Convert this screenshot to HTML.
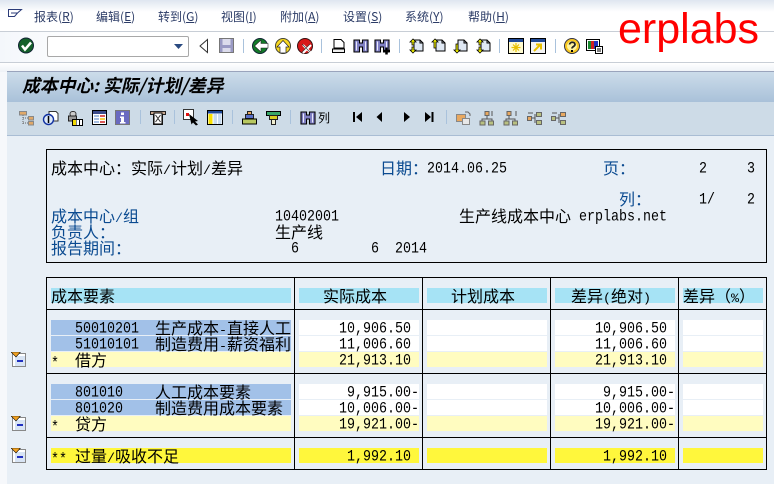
<!DOCTYPE html>
<html><head><meta charset="utf-8"><style>
html,body{margin:0;padding:0}
body{width:774px;height:484px;overflow:hidden;position:relative;background:#f6f8fb;font-family:"Liberation Mono","WenQuanYi Zen Hei","Noto Sans CJK SC",monospace;color:#000}
div,span.a,svg.i{position:absolute}
.b{background:#000}
.c,.n,.k{white-space:pre;height:16px;line-height:16px}
.c{font-size:16px;margin-top:-1px;font-family:"WenQuanYi Zen Hei","Noto Sans CJK SC",sans-serif}
.k{font-size:16px;margin-top:-1px;font-family:"WenQuanYi Zen Hei","Noto Sans CJK SC",sans-serif;color:#0a4a90}
.n{font-size:13.33px;margin-top:2px;font-family:"Liberation Mono",monospace;transform:scaleY(1.2);transform-origin:50% 50%}
.c i,.k i{font-style:normal;display:inline-block;width:8px;text-align:center;font-family:"Liberation Mono",monospace;font-size:13.33px}
.m{font-size:12px;line-height:14px;top:10px;color:#2b3b66;white-space:pre;font-family:"WenQuanYi Zen Hei","Noto Sans CJK SC",sans-serif}
.s{width:1px;background:#a9c2dc;height:14px}
.h{background:#a6e3f5;height:15px}
.w{background:#fff;height:15px}
.y{background:#fffcc0;height:15px}
.z{background:#fff73c;height:15px}
.q{background:#a2c1e8;height:15px}
svg.i{width:16px;height:16px;overflow:visible}
</style></head><body>
<svg width="0" height="0" style="position:absolute"><defs>
<symbol id="bino" viewBox="0 0 16 16"><path d="M1 2h5.500v3h3V2H15v12H9.500V9h-3v5H1z" fill="#8080c4" stroke="#000" stroke-width="1.100"/><path d="M3.500 3.500v9M12.500 3.500v9" stroke="#e8e8f8" stroke-width="1"/></symbol>
<symbol id="page" viewBox="0 0 16 16"><path d="M5 2h6l3 3v8H5z" fill="#dfe8f4" stroke="#000"/><path d="M11 2v3h3" fill="none" stroke="#000"/></symbol>
<symbol id="win" viewBox="0 0 16 16"><rect x=".5" y=".5" width="15" height="15" fill="#fffbd0" stroke="#000"/><rect x="1" y="1" width="14" height="3" fill="#204a98"/></symbol>
<symbol id="note" viewBox="0 0 16 16"><rect x="1.500" y="1.500" width="13" height="13" fill="#fff" stroke="#888"/><rect x="4" y="4" width="10" height="10" fill="#d8e4f4"/><path d="M6 9h6" stroke="#2030c0" stroke-width="2"/><path d="M0 0h9.500L5 5z" fill="#f0a020" stroke="#000" stroke-width=".6"/></symbol>
</defs></svg>

<!-- top bands -->
<div style="left:0;top:0;width:774px;height:31px;background:linear-gradient(#dfe6f0,#fff 38%)"></div>
<div style="left:0;top:31px;width:774px;height:1px;background:#c8ced6"></div>
<div style="left:0;top:32px;width:774px;height:30px;background:linear-gradient(90deg,#f4f7fb,#fff 12%)"></div>
<div style="left:0;top:62px;width:774px;height:1px;background:#c8ced6"></div>
<div style="left:0;top:63px;width:774px;height:9px;background:linear-gradient(#fff,#eef2f7)"></div>

<!-- menu -->
<svg class="i" style="left:7px;top:8px"><path d="M1.500 1.500h13l-4 3.500-3 3.500h-6z" fill="none" stroke="#2b3b78" stroke-width="1"/><path d="M4 5h6" stroke="#2b3b78"/></svg>
<div class="m" style="left:34px">报表(<u>R</u>)</div>
<div class="m" style="left:96px">编辑(<u>E</u>)</div>
<div class="m" style="left:158px">转到(<u>G</u>)</div>
<div class="m" style="left:221px">视图(<u>I</u>)</div>
<div class="m" style="left:280px">附加(<u>A</u>)</div>
<div class="m" style="left:343px">设置(<u>S</u>)</div>
<div class="m" style="left:405px">系统(<u>Y</u>)</div>
<div class="m" style="left:468px">帮助(<u>H</u>)</div>
<div style="left:618px;top:5px;font:43px/48px 'Liberation Sans',sans-serif;color:#f00;white-space:pre">erplabs</div>

<!-- toolbar 1 -->
<svg class="i" style="left:18px;top:38px"><circle cx="8" cy="7.500" r="7.500" fill="#14602a" stroke="#123"/><path d="M4 7.500l3 4 6-7" fill="none" stroke="#fff" stroke-width="2.500"/></svg>
<div style="left:47px;top:36px;width:140px;height:19px;background:#fff;border:1px solid #a8a8a8;border-radius:2px"></div>
<svg class="i" style="left:172px;top:42px"><path d="M2 2h9L6.500 7z" fill="#2a4a80"/></svg>
<svg class="i" style="left:198px;top:38px"><path d="M9.500 1.500v13L2 8z" fill="#fff" stroke="#333"/></svg>
<svg class="i" style="left:219px;top:38px"><rect x=".5" y=".5" width="14" height="14" fill="#9a9ac4" stroke="#777"/><rect x="3.500" y="1" width="8" height="6" fill="#dcdcec"/><rect x="3.500" y="10" width="8" height="4" fill="#dcdcec"/></svg>
<div class="s" style="left:243px;top:39px"></div>
<svg class="i" style="left:252px;top:38px"><circle cx="8" cy="8" r="7.500" fill="#127a28" stroke="#123"/><path d="M16 5.500h-7V2L2.500 8 9 14v-4h7z" fill="#fff" stroke="#222" stroke-width=".6"/></svg>
<svg class="i" style="left:275px;top:38px"><circle cx="8" cy="8" r="7.500" fill="#f8d820" stroke="#443"/><path d="M8 2.500L14 9h-3v6H5V9H2z" fill="#fff" stroke="#222" stroke-width=".7"/></svg>
<svg class="i" style="left:297px;top:38px"><circle cx="8" cy="8" r="7.500" fill="#d81818" stroke="#311"/><path d="M6 7l8 8M14 7l-8 8" stroke="#fff" stroke-width="2.200"/><path d="M5 6l8 8M13 6l-8 8" stroke="#333" stroke-width=".6"/></svg>
<div class="s" style="left:321px;top:39px"></div>
<svg class="i" style="left:331px;top:38px"><path d="M3 1.500h7l3 3V10H3z" fill="#fff" stroke="#000"/><path d="M1.500 11h12v3.500h-12z" fill="#eee" stroke="#000"/></svg>
<svg class="i" style="left:353px;top:38px"><use href="#bino"/></svg>
<svg class="i" style="left:374px;top:38px"><use href="#bino"/><path d="M9 13h7M12.500 9.500v7" stroke="#000" stroke-width="2.500"/></svg>
<div class="s" style="left:399px;top:39px"></div>
<svg class="i" style="left:409px;top:38px"><use href="#page"/><path d="M4 1L1 4h2v3h2V4h2zM4 15l3-3H5V9H3v3H1z" fill="#ff0" stroke="#000" stroke-width=".8"/></svg>
<svg class="i" style="left:431px;top:38px"><use href="#page"/><path d="M4 1L1 4h2v6h2V4h2z" fill="#ff0" stroke="#000" stroke-width=".8"/></svg>
<svg class="i" style="left:453px;top:38px"><use href="#page"/><path d="M4 15l3-3H5V6H3v6H1z" fill="#ff0" stroke="#000" stroke-width=".8"/></svg>
<svg class="i" style="left:476px;top:38px"><use href="#page"/><path d="M4 1L1 4h2v3h2V4h2zM4 15l3-3H5V9H3v3H1z" fill="#ff0" stroke="#000" stroke-width=".8"/></svg>
<div class="s" style="left:499px;top:39px"></div>
<svg class="i" style="left:508px;top:38px"><use href="#win"/><path d="M8 5v9M3.500 9.500h9M5 6.500l6 6M11 6.500l-6 6" stroke="#e8c000" stroke-width="1.200"/></svg>
<svg class="i" style="left:530px;top:38px"><use href="#win"/><rect x="1" y="4" width="14" height="11" fill="#f4f4f4"/><path d="M4 13l6-6M6 6.500h5v5" fill="none" stroke="#e8c000" stroke-width="2"/></svg>
<div class="s" style="left:555px;top:39px"></div>
<svg class="i" style="left:564px;top:38px"><circle cx="8" cy="8" r="7.500" fill="#f8c820" stroke="#334"/><circle cx="8" cy="8" r="5" fill="#fff4a0"/><path d="M5.500 6.500C6 3.500 11 3.500 11 6.500 11 8.500 8 8.500 8 10.500" fill="none" stroke="#222" stroke-width="1.800"/><rect x="7" y="12" width="2" height="2"/></svg>
<svg class="i" style="left:586px;top:38px"><rect x=".5" y="1.500" width="13" height="11" fill="#fff" stroke="#000"/><rect x="2" y="3" width="3" height="8" fill="#1a8a30"/><rect x="5" y="3" width="3" height="8" fill="#d02020"/><rect x="8" y="3" width="4" height="8" fill="#2030c0"/><rect x="9.500" y="8.500" width="7" height="7" fill="#fff" stroke="#000"/><path d="M11 11h4M11 13h4" stroke="#000"/></svg>

<!-- title bar -->
<div style="left:7px;top:71px;width:767px;height:1px;background:#9aa4bc"></div>
<div style="left:7px;top:72px;width:767px;height:30px;background:linear-gradient(#ccdcea,#a9c1d9)"></div>
<div style="left:22px;top:75px;height:20px;line-height:20px;font-size:17.800px;font-weight:bold;font-style:italic;white-space:pre;font-family:'WenQuanYi Zen Hei','Noto Sans CJK SC',sans-serif">成本中心: 实际/计划/差异</div>
<div style="left:7px;top:102px;width:767px;height:33px;background:#cddbe7"></div>
<div style="left:7px;top:135px;width:767px;height:1px;background:#a9bdd4"></div>
<div style="left:7px;top:136px;width:767px;height:348px;background:#e8eff6"></div>

<!-- toolbar 2 -->
<svg class="i" style="left:19px;top:110px"><path d="M4 5v9M4 8h6M4 13h6" stroke="#666" stroke-dasharray="1 1"/><rect x=".5" y="1.500" width="7" height="3.500" fill="#e0a868" stroke="#888"/><rect x="9.500" y="6.500" width="5" height="3.500" fill="#e0a868" stroke="#888"/><rect x="9.500" y="11.500" width="5" height="3.500" fill="#e0a868" stroke="#888"/></svg>
<svg class="i" style="left:43px;top:110px"><path d="M6 1.500h7l2 2V11H6z" fill="#fff" stroke="#333"/><circle cx="5.500" cy="9.500" r="5" fill="#dce8f8" stroke="#1030a0" stroke-width="1.400"/><path d="M5.500 6v7" stroke="#000" stroke-width="1.500"/></svg>
<svg class="i" style="left:67px;top:110px"><rect x="3" y="1.500" width="6" height="5" rx="2.500" fill="#ccc" stroke="#333"/><rect x="1.500" y="6" width="8" height="5" fill="#999" stroke="#222"/><rect x="5.500" y="9.500" width="10" height="6" fill="#fff" stroke="#000"/><path d="M9 10v5M12.500 10v5" stroke="#000"/><rect x="6" y="10" width="3" height="5" fill="#f0d800"/></svg>
<svg class="i" style="left:92px;top:110px"><rect x=".5" y=".5" width="14" height="14" fill="#fff" stroke="#000"/><rect x="1" y="1" width="13" height="3" fill="#3a4a8a"/><path d="M2 6h5M2 9h5M2 12h5" stroke="#88a8d8" stroke-width="1.500"/><path d="M8 6h5" stroke="#d02020" stroke-width="1.500"/><path d="M8 9h5" stroke="#f0c000" stroke-width="1.500"/><path d="M8 12h5" stroke="#d02020" stroke-width="1.500"/></svg>
<svg class="i" style="left:115px;top:110px"><rect x=".5" y=".5" width="14" height="14" fill="#6a6ac0" stroke="#777"/><rect x="6" y="2.500" width="3" height="2.500" fill="#fff"/><path d="M5 6.500h4v5.500h1.500v1.500h-5.500V12H6V8H5z" fill="#fff"/></svg>
<div class="s" style="left:140px;top:110px"></div>
<svg class="i" style="left:150px;top:110px"><path d="M.5 1.500h15v3h-2l-1 0v10h-9V4.500h-3z" fill="#c8a890" stroke="#222"/><rect x="4" y="3" width="8" height="11" fill="#fff" stroke="#000"/><path d="M5.500 5l5 7M10.500 5l-5 7" stroke="#333"/></svg>
<div class="s" style="left:174px;top:110px"></div>
<svg class="i" style="left:183px;top:109px"><rect x=".5" y=".5" width="10" height="10" fill="#fff" stroke="#333"/><rect x="3" y="4" width="3" height="3" fill="#e01010"/><path d="M6 5l9 7-3 .5 3 3-2 1-3-3-1.500 2z" fill="#000"/></svg>
<svg class="i" style="left:207px;top:110px"><rect x=".5" y=".5" width="15" height="14" fill="#fff" stroke="#000"/><rect x="1" y="1" width="14" height="2.500" fill="#204a98"/><rect x="1.500" y="4" width="4" height="10" fill="#f8e000"/><rect x="6.500" y="4" width="3.500" height="10" fill="#c8dcf0"/><rect x="11" y="4" width="3.500" height="10" fill="#c8dcf0"/></svg>
<div class="s" style="left:232px;top:110px"></div>
<svg class="i" style="left:242px;top:110px"><rect x="5.500" y="1.500" width="4" height="3" fill="#e8a860" stroke="#222"/><rect x="3.500" y="4.500" width="8" height="4" fill="#5a70c8" stroke="#222"/><rect x=".5" y="9" width="14" height="5" fill="#b8c860" stroke="#000"/></svg>
<svg class="i" style="left:266px;top:110px"><rect x=".5" y="1.500" width="14" height="4" fill="#38a868" stroke="#000"/><rect x="3.500" y="5.500" width="8" height="4" fill="#d8d020" stroke="#222"/><rect x="5.500" y="9.500" width="4" height="5" fill="#f0eed0" stroke="#222"/></svg>
<div class="s" style="left:290px;top:110px"></div>
<svg class="i" style="left:300px;top:110px"><use href="#bino"/></svg>
<div style="left:318px;top:111px;font-size:12px;line-height:14px;font-family:'WenQuanYi Zen Hei','Noto Sans CJK SC',sans-serif">列</div>
<svg class="i" style="left:352px;top:110px"><path d="M1 2h2v10H1zM10 2v10L4 7z"/></svg>
<svg class="i" style="left:375px;top:110px"><path d="M7 2v10L1.500 7z"/></svg>
<svg class="i" style="left:403px;top:110px"><path d="M1 2v10l6-5z"/></svg>
<svg class="i" style="left:424px;top:110px"><path d="M1 2v10l6-5zM7.500 2h2v10h-2z"/></svg>
<div class="s" style="left:446px;top:110px"></div>
<svg class="i" style="left:456px;top:110px"><rect x=".5" y="4.500" width="9" height="7" fill="#e8a860" stroke="#888"/><rect x="6.500" y="8.500" width="7" height="6" fill="#e8e8e8" stroke="#888"/><path d="M9 2h3l2 2v2" fill="none" stroke="#666"/></svg>
<svg class="i" style="left:479px;top:110px"><rect x="6" y="1.500" width="4" height="4" fill="#e8a860" stroke="#666"/><path d="M8 6v3M3 11V9h10v2M13 6V1" fill="none" stroke="#555"/><rect x="1" y="11" width="5" height="4" fill="#b8c080" stroke="#666"/><rect x="9.500" y="11" width="5" height="4" fill="#b8c080" stroke="#666"/></svg>
<svg class="i" style="left:503px;top:110px"><rect x="4" y="1.500" width="4" height="4" fill="#e8a860" stroke="#666"/><path d="M6 6v3M3 11V9h9v2M13 1v5" fill="none" stroke="#555"/><rect x="1" y="11" width="5" height="4" fill="#b8c080" stroke="#666"/><rect x="9.500" y="11" width="5" height="4" fill="#b8c080" stroke="#666"/></svg>
<svg class="i" style="left:527px;top:110px"><rect x=".5" y="6.500" width="4" height="4" fill="#e8a860" stroke="#666"/><path d="M1 3h5M5 8h3M8 4v9" fill="none" stroke="#555"/><rect x="9.500" y="2.500" width="5" height="4" fill="#b8c080" stroke="#666"/><rect x="9.500" y="10.500" width="5" height="4" fill="#b8c080" stroke="#666"/></svg>
<svg class="i" style="left:551px;top:110px"><rect x=".5" y="6.500" width="4" height="4" fill="#b8c080" stroke="#666"/><path d="M1 3h5M5 8h3M8 4v9" fill="none" stroke="#555"/><rect x="9.500" y="2.500" width="5" height="4" fill="#e8a860" stroke="#666"/><rect x="9.500" y="10.500" width="5" height="4" fill="#b8c080" stroke="#666"/></svg>

<!-- header box -->
<div style="left:46px;top:149px;width:719px;height:112px;border:1px solid #000"></div>
<div class="c" style="left:51px;top:160px">成本中心：实际<i>/</i>计划<i>/</i>差异</div>
<div class="k" style="left:380px;top:160px">日期：</div>
<div class="n" style="left:427px;top:160px">2014.06.25</div>
<div class="k" style="left:603px;top:160px">页：</div>
<div class="n" style="left:699px;top:160px">2</div>
<div class="n" style="left:747px;top:160px">3</div>
<div class="k" style="left:619px;top:191px">列：</div>
<div class="n" style="left:699px;top:191px">1/</div>
<div class="n" style="left:747px;top:191px">2</div>
<div class="k" style="left:51px;top:208px">成本中心<i>/</i>组</div>
<div class="n" style="left:275px;top:208px">10402001</div>
<div class="c" style="left:459px;top:208px">生产线成本中心</div>
<div class="n" style="left:579px;top:208px">erplabs.net</div>
<div class="k" style="left:51px;top:224px">负责人：</div>
<div class="c" style="left:275px;top:224px">生产线</div>
<div class="k" style="left:51px;top:240px">报告期间：</div>
<div class="n" style="left:291px;top:240px">6</div>
<div class="n" style="left:371px;top:240px">6</div>
<div class="n" style="left:395px;top:240px">2014</div>

<!-- table grid -->
<div class="b" style="left:46px;top:277px;width:721px;height:1px"></div>
<div class="b" style="left:46px;top:309px;width:721px;height:1px"></div>
<div class="b" style="left:46px;top:373px;width:721px;height:1px"></div>
<div class="b" style="left:46px;top:437px;width:721px;height:1px"></div>
<div class="b" style="left:46px;top:469px;width:721px;height:1px"></div>
<div class="b" style="left:46px;top:277px;width:1px;height:193px"></div>
<div class="b" style="left:294px;top:277px;width:1px;height:193px"></div>
<div class="b" style="left:422px;top:277px;width:1px;height:193px"></div>
<div class="b" style="left:550px;top:277px;width:1px;height:193px"></div>
<div class="b" style="left:678px;top:277px;width:1px;height:193px"></div>
<div class="b" style="left:766px;top:277px;width:1px;height:193px"></div>

<!-- header cells -->
<div class="h" style="left:51px;top:288px;width:240px"></div>
<div class="h" style="left:299px;top:288px;width:120px"></div>
<div class="h" style="left:427px;top:288px;width:120px"></div>
<div class="h" style="left:555px;top:288px;width:120px"></div>
<div class="h" style="left:683px;top:288px;width:80px"></div>
<div class="c" style="left:51px;top:288px">成本要素</div>
<div class="c" style="left:323px;top:288px">实际成本</div>
<div class="c" style="left:451px;top:288px">计划成本</div>
<div class="c" style="left:571px;top:288px">差异<i>(</i>绝对<i>)</i></div>
<div class="c" style="left:683px;top:288px">差异（<i>%</i>）</div>

<!-- group 1 -->
<div class="q" style="left:51px;top:320px;width:240px"></div>
<div class="w" style="left:299px;top:320px;width:120px"></div>
<div class="w" style="left:427px;top:320px;width:120px"></div>
<div class="w" style="left:555px;top:320px;width:120px"></div>
<div class="w" style="left:683px;top:320px;width:80px"></div>
<div class="q" style="left:51px;top:336px;width:240px"></div>
<div class="w" style="left:299px;top:336px;width:120px"></div>
<div class="w" style="left:427px;top:336px;width:120px"></div>
<div class="w" style="left:555px;top:336px;width:120px"></div>
<div class="w" style="left:683px;top:336px;width:80px"></div>
<div class="y" style="left:51px;top:352px;width:240px"></div>
<div class="y" style="left:299px;top:352px;width:120px"></div>
<div class="y" style="left:427px;top:352px;width:120px"></div>
<div class="y" style="left:555px;top:352px;width:120px"></div>
<div class="y" style="left:683px;top:352px;width:80px"></div>
<div class="n" style="left:75px;top:320px">50010201</div>
<div class="c" style="left:155px;top:320px">生产成本<i>-</i>直接人工</div>
<div class="n" style="left:75px;top:336px">51010101</div>
<div class="c" style="left:155px;top:336px">制造费用<i>-</i>薪资福利</div>
<div class="n" style="left:51px;top:355px">*</div>
<div class="c" style="left:75px;top:352px">借方</div>
<div class="n" style="left:339px;top:320px">10,906.50</div>
<div class="n" style="left:339px;top:336px">11,006.60</div>
<div class="n" style="left:339px;top:352px">21,913.10</div>
<div class="n" style="left:595px;top:320px">10,906.50</div>
<div class="n" style="left:595px;top:336px">11,006.60</div>
<div class="n" style="left:595px;top:352px">21,913.10</div>

<!-- group 2 -->
<div class="q" style="left:51px;top:384px;width:240px"></div>
<div class="w" style="left:299px;top:384px;width:120px"></div>
<div class="w" style="left:427px;top:384px;width:120px"></div>
<div class="w" style="left:555px;top:384px;width:120px"></div>
<div class="w" style="left:683px;top:384px;width:80px"></div>
<div class="q" style="left:51px;top:400px;width:240px"></div>
<div class="w" style="left:299px;top:400px;width:120px"></div>
<div class="w" style="left:427px;top:400px;width:120px"></div>
<div class="w" style="left:555px;top:400px;width:120px"></div>
<div class="w" style="left:683px;top:400px;width:80px"></div>
<div class="y" style="left:51px;top:416px;width:240px"></div>
<div class="y" style="left:299px;top:416px;width:120px"></div>
<div class="y" style="left:427px;top:416px;width:120px"></div>
<div class="y" style="left:555px;top:416px;width:120px"></div>
<div class="y" style="left:683px;top:416px;width:80px"></div>
<div class="n" style="left:75px;top:384px">801010</div>
<div class="c" style="left:155px;top:384px">人工成本要素</div>
<div class="n" style="left:75px;top:400px">801020</div>
<div class="c" style="left:155px;top:400px">制造费用成本要素</div>
<div class="n" style="left:51px;top:419px">*</div>
<div class="c" style="left:75px;top:416px">贷方</div>
<div class="n" style="left:347px;top:384px">9,915.00-</div>
<div class="n" style="left:339px;top:400px">10,006.00-</div>
<div class="n" style="left:339px;top:416px">19,921.00-</div>
<div class="n" style="left:603px;top:384px">9,915.00-</div>
<div class="n" style="left:595px;top:400px">10,006.00-</div>
<div class="n" style="left:595px;top:416px">19,921.00-</div>

<!-- total -->
<div class="z" style="left:51px;top:448px;width:240px"></div>
<div class="z" style="left:299px;top:448px;width:120px"></div>
<div class="z" style="left:427px;top:448px;width:120px"></div>
<div class="z" style="left:555px;top:448px;width:120px"></div>
<div class="z" style="left:683px;top:448px;width:80px"></div>
<div class="n" style="left:51px;top:451px">**</div>
<div class="c" style="left:75px;top:448px">过量<i>/</i>吸收不足</div>
<div class="n" style="left:347px;top:448px">1,992.10</div>
<div class="n" style="left:603px;top:448px">1,992.10</div>

<!-- row icons -->
<svg class="i" style="left:11px;top:352px"><use href="#note"/></svg>
<svg class="i" style="left:11px;top:416px"><use href="#note"/></svg>
<svg class="i" style="left:11px;top:448px"><use href="#note"/></svg>
</body></html>
